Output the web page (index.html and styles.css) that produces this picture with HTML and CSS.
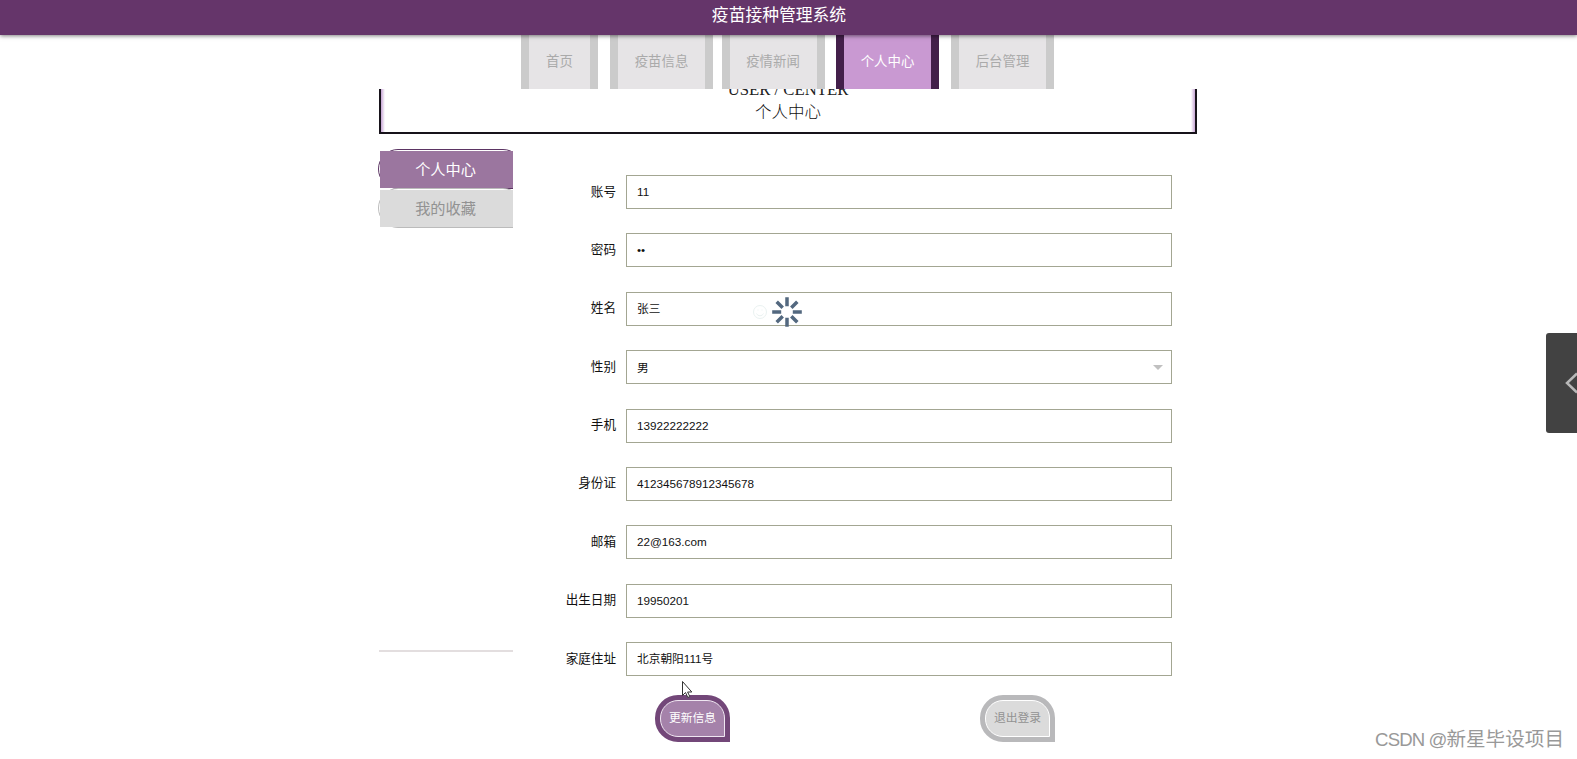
FILE: index.html
```html
<!DOCTYPE html>
<html lang="zh">
<head>
<meta charset="utf-8">
<title>疫苗接种管理系统</title>
<link rel="stylesheet" href="styles.css">
</head>
<body>
    <div class="header">疫苗接种管理系统</div>

    <div class="nav">
        <a class="nav-item">首页</a>
        <a class="nav-item">疫苗信息</a>
        <a class="nav-item">疫情新闻</a>
        <a class="nav-item active">个人中心</a>
        <a class="nav-item">后台管理</a>
    </div>

    <div class="container">
        <div class="banner">
            <div class="banner-en">USER / CENTER</div>
            <div class="banner-cn">个人中心</div>
        </div>

        <div class="main">
            <div class="side">
                <div class="side-item active"><span>个人中心</span></div>
                <div class="side-item"><span>我的收藏</span></div>
            </div>

            <div class="form">
                <div class="row"><label>账号</label><div class="input">11</div></div>
                <div class="row"><label>密码</label><div class="input">••</div></div>
                <div class="row"><label>姓名</label><div class="input">张三</div></div>
                <div class="row"><label>性别</label><div class="input select">男</div></div>
                <div class="row"><label>手机</label><div class="input">13922222222</div></div>
                <div class="row"><label>身份证</label><div class="input">412345678912345678</div></div>
                <div class="row"><label>邮箱</label><div class="input">22@163.com</div></div>
                <div class="row"><label>出生日期</label><div class="input">19950201</div></div>
                <div class="row"><label>家庭住址</label><div class="input">北京朝阳111号</div></div>
                <div class="buttons">
                    <div class="btn update"><span>更新信息</span></div>
                    <div class="btn logout"><span>退出登录</span></div>
                </div>
            </div>
        </div>
    </div>

    <!-- loading -->
    <svg class="loading" width="52" height="34" viewBox="0 0 52 34">
        <g fill="none" stroke="#eaf2f1">
            <circle cx="13" cy="17" r="6.500"/>
            <path d="M9.500 18.500c1.500 3 5.500 3 7 0M10.500 15h1M14.500 15h1"/>
        </g>
        <path stroke="#53687f" stroke-width="3.500" d="M40 2.200v9M40 22.800v9M25.200 17h9M45.800 17h9M29.700 6.700l6 6M50.300 6.700l-6 6M29.700 27.300l6-6M50.300 27.300l-6-6"/>
    </svg>

    <div class="drawer">
        <svg width="13" height="22" viewBox="0 0 13 22"><path d="M13 1.500L3 11l10 9.500" fill="none" stroke="#b8b8b8" stroke-width="2.500"/></svg>
    </div>

    <svg class="cursor" width="12" height="18" viewBox="0 0 12 18">
        <path d="M.5.500v14l3-3 2.300 5 2-1-2.200-4.500h4.200z" fill="#fff" stroke="#333"/>
    </svg>

    <div class="watermark"><span>CSDN @</span>新星毕设项目</div>
</body>
</html>
```
FILE: styles.css
```css
html, body
{
    margin: 0;
    padding: 0;
    height: 759px;
    overflow: hidden;
    background: #fff;
}

body
{
    position: relative;
    font-family: "Liberation Sans", "Noto Sans CJK SC", sans-serif;
    font-size: 12.6px;
    color: #111;
}

.header
{
    position: relative;
    z-index: 2;
    box-sizing: border-box;
    height: 35px;
    padding-right: 19px;
    line-height: 32px;
    text-align: center;
    font-size: 16.8px;
    color: #fff;
    background: #65356a;
    box-shadow: 0 1px 4px rgba(0, 0, 0, 0.5);
}

.nav
{
    display: flex;
    height: 54px;
    padding-left: 521px;
    background: #fff;
}

.nav-item
{
    box-sizing: border-box;
    width: 103px;
    margin-right: 12px;
    border: solid #cbcbcb;
    border-width: 0 8px;
    line-height: 54px;
    text-align: center;
    font-size: 13.4px;
    color: #aaa;
    background: #e6e4e6;
}

.nav-item:first-child
{
    width: 77px;
}

.nav-item:nth-child(2)
{
    margin-right: 8.5px;
}

.nav-item:nth-child(3)
{
    margin-right: 11.5px;
}

.nav-item.active
{
    color: #fff;
    border-color: #431f4a;
    background: #c999d2;
}

.container
{
    width: 818px;
    margin-left: 379px;
}

/* the banner is scrolled half way under the nav */
.banner
{
    box-sizing: border-box;
    height: 45px;
    overflow: hidden;
    border: 2px solid #17131a;
    border-top: 0;
    text-align: center;
    background:
        linear-gradient(to right, #c7a5d5, #fff) 0 0 / 4px 100% no-repeat,
        linear-gradient(to left, #c7a5d5, #fff) 100% 0 / 4px 100% no-repeat;
}

.banner-en
{
    height: 18px;
    margin-top: -8px;
    line-height: 18px;
    font-family: "Liberation Serif", serif;
    font-size: 16.7px;
    color: #222;
}

.banner-cn
{
    line-height: 26px;
    font-size: 16.5px;
    font-weight: 300;
    color: #111;
}

.main
{
    display: flex;
}

.side
{
    box-sizing: border-box;
    width: 135px;
    height: 503px;
    margin: 15px 0 0 -1px;
    overflow: hidden;
    background: linear-gradient(#e3dedf, #e3dedf) 1px 100% / 134px 2px no-repeat;
}

.side-item
{
    box-sizing: border-box;
    width: 145px;
    height: 40px;
    padding-top: 1px;
    border: 1.5px solid #bbb;
    border-radius: 20px 20px 0 20px;
}

.side-item + .side-item
{
    margin-top: -1px;
}

.side-item span
{
    display: block;
    height: 37px;
    margin-left: 1px;
    padding-right: 11px;
    line-height: 37px;
    text-align: center;
    font-size: 15.2px;
    color: #929292;
    background: #dbdbdb;
}

.side-item.active
{
    border-color: #5b3463;
}

.side-item.active span
{
    color: #fff;
    background: #9b769f;
}

.form
{
    width: 659px;
    padding-top: 41px;
}

.row
{
    display: flex;
    align-items: center;
    height: 34px;
    margin-bottom: 24.4px;
}

.row label
{
    width: 103px;
    margin-right: 10px;
    text-align: right;
    line-height: 33px;
}

.input
{
    box-sizing: border-box;
    width: 546px;
    height: 34px;
    padding: 0 10px;
    border: 1px solid #a3a692;
    line-height: 31px;
    font-size: 11.7px;
}

.select
{
    display: flex;
    justify-content: space-between;
    align-items: center;
    padding-right: 8px;
}

.select::after
{
    content: "";
    border: 5px solid transparent;
    border-top-color: #c0c0c0;
    border-bottom: 0;
}

.buttons
{
    display: flex;
    gap: 250px;
    margin-top: -5.5px;
    padding-left: 142px;
}

.btn
{
    box-sizing: border-box;
    width: 75px;
    height: 47px;
    border: 5px solid #734779;
    border-radius: 23px 23px 0 23px;
    background: #734779;
}

.btn span
{
    display: block;
    box-sizing: border-box;
    height: 37px;
    border: 1px solid #efe6f1;
    border-radius: 18px 18px 0 18px;
    line-height: 35px;
    text-align: center;
    font-size: 11.8px;
    color: #fff;
    background: #a582aa;
}

.logout
{
    border-color: #b9b9bb;
    background: #b9b9bb;
}

.logout span
{
    border-color: #fff;
    color: #929292;
    background: #dbdbdb;
}

.loading
{
    position: absolute;
    left: 747px;
    top: 295px;
    overflow: visible;
}

.drawer
{
    position: absolute;
    right: 0;
    top: 333px;
    display: flex;
    align-items: center;
    justify-content: flex-end;
    width: 31px;
    height: 100px;
    border-radius: 3px 0 0 3px;
    background: #424242;
}

.cursor
{
    position: absolute;
    left: 682px;
    top: 681px;
}

.watermark
{
    position: absolute;
    right: 13px;
    bottom: 4px;
    font-size: 19.6px;
    line-height: 30px;
    color: #999;
}

.watermark span
{
    font-size: 18.6px;
    letter-spacing: -0.9px;
}
```
